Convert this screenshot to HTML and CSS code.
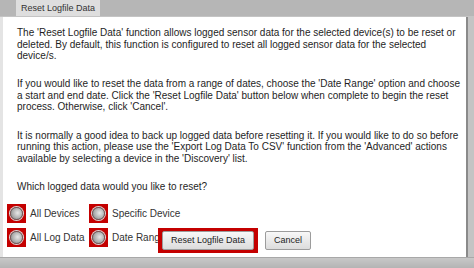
FILE: index.html
```html
<!DOCTYPE html>
<html>
<head>
<meta charset="utf-8">
<link rel="stylesheet" href="styles.css">
</head>
<body>
<div class="window">
  <div class="titlebar">
    <span class="title">Reset Logfile Data</span>
  </div>
  <div class="frame">
    <div class="content">
      <p>The 'Reset Logfile Data' function allows logged sensor data for the selected device(s) to be reset or<br>deleted. By default, this function is configured to reset all logged sensor data for the selected<br>device/s.</p>
      <p>If you would like to reset the data from a range of dates, choose the 'Date Range' option and choose<br>a start and end date. Click the 'Reset Logfile Data' button below when complete to begin the reset<br>process. Otherwise, click 'Cancel'.</p>
      <p>It is normally a good idea to back up logged data before resetting it. If you would like to do so before<br>running this action, please use the 'Export Log Data To CSV' function from the 'Advanced' actions<br>available by selecting a device in the 'Discovery' list.</p>
      <p class="question">Which logged data would you like to reset?</p>
      <div class="bottom">
        <div class="options">
          <label class="opt"><span class="hl"><span class="radio"></span></span>All Devices</label>
          <label class="opt"><span class="hl"><span class="radio"></span></span>Specific Device</label>
          <label class="opt"><span class="hl"><span class="radio"></span></span>All Log Data</label>
          <label class="opt"><span class="hl"><span class="radio"></span></span>Date Range</label>
        </div>
        <div class="actions">
          <span class="btn-hl"><button class="btn">Reset Logfile Data</button></span>
          <button class="btn">Cancel</button>
        </div>
      </div>
    </div>
    <div class="edge"></div>
  </div>
  <div class="footer"></div>
</div>
</body>
</html>
```
FILE: styles.css
```css
html, body {
  margin: 0;
  padding: 0;
  background: #ffffff;
}
.window {
  width: 474px;
  height: 268px;
  display: flex;
  flex-direction: column;
  font-family: "Liberation Sans", Arial, sans-serif;
  font-size: 10px;
  color: #1e1e1e;
  overflow: hidden;
}
.titlebar {
  height: 16px;
  flex: none;
  display: flex;
  align-items: center;
  padding-left: 16px;
  background-color: #d6d6d6;
  background-image: radial-gradient(circle, #b4b4b4 0.7px, transparent 0.8px);
  background-size: 2px 2px;
  border-bottom: 1px solid #c4c4c4;
}
.title {
  background: #dedede;
  padding: 2px 5px 2px 5px;
  color: #333;
  font-size: 9px;
  line-height: 12px;
}
.frame {
  flex: 1;
  display: flex;
  background: #ffffff;
  border-left: 3px solid #e4e4e4;
  min-height: 0;
}
.content {
  flex: 1;
  padding: 10px 2px 0 14px;
}
.edge {
  width: 8px;
  flex: none;
  border-left: 2px solid #8a8a8a;
  background: #c4c4c4;
  box-sizing: border-box;
}
p {
  margin: 0 0 16.5px 0;
  line-height: 11.6px;
  white-space: nowrap;
}
p.question {
  margin-bottom: 11.5px;
}
.bottom {
  display: grid;
}
.options,
.actions {
  grid-area: 1 / 1;
}
.options {
  display: grid;
  grid-template-columns: 82px auto;
  row-gap: 5px;
  margin-left: -10px;
  align-self: start;
  justify-self: start;
}
.opt {
  display: flex;
  align-items: center;
  gap: 4px;
  color: #333;
  white-space: nowrap;
}
.hl {
  width: 19px;
  height: 19px;
  background: #c40000;
  display: flex;
  align-items: center;
  justify-content: center;
}
.radio {
  width: 11px;
  height: 11px;
  border-radius: 50%;
  background: radial-gradient(circle at 60% 45%, #e8e8e8 0%, #b0b0b0 55%, #7a7a7a 100%);
  border: 1px solid #6a6a6a;
  box-shadow: 0 0 0 1px #d8d8d8;
}
.actions {
  display: flex;
  align-items: center;
  justify-content: center;
  gap: 7px;
  align-self: end;
  margin-left: -12px;
  margin-bottom: -6px;
}
.btn-hl {
  background: #c40000;
  padding: 3px 4px;
  display: flex;
}
.btn {
  font-family: "Liberation Sans", Arial, sans-serif;
  font-size: 9px;
  color: #222;
  background: linear-gradient(#f8f8f8, #dcdcdc);
  border: 1px solid #9c9c9c;
  border-radius: 2px;
  padding: 0 8px;
  height: 19px;
  line-height: 17px;
}
.footer {
  height: 10px;
  flex: none;
  background: linear-gradient(#c8c8c8, #b4b4b4);
  border-top: 1px solid #a8a8a8;
}
```
